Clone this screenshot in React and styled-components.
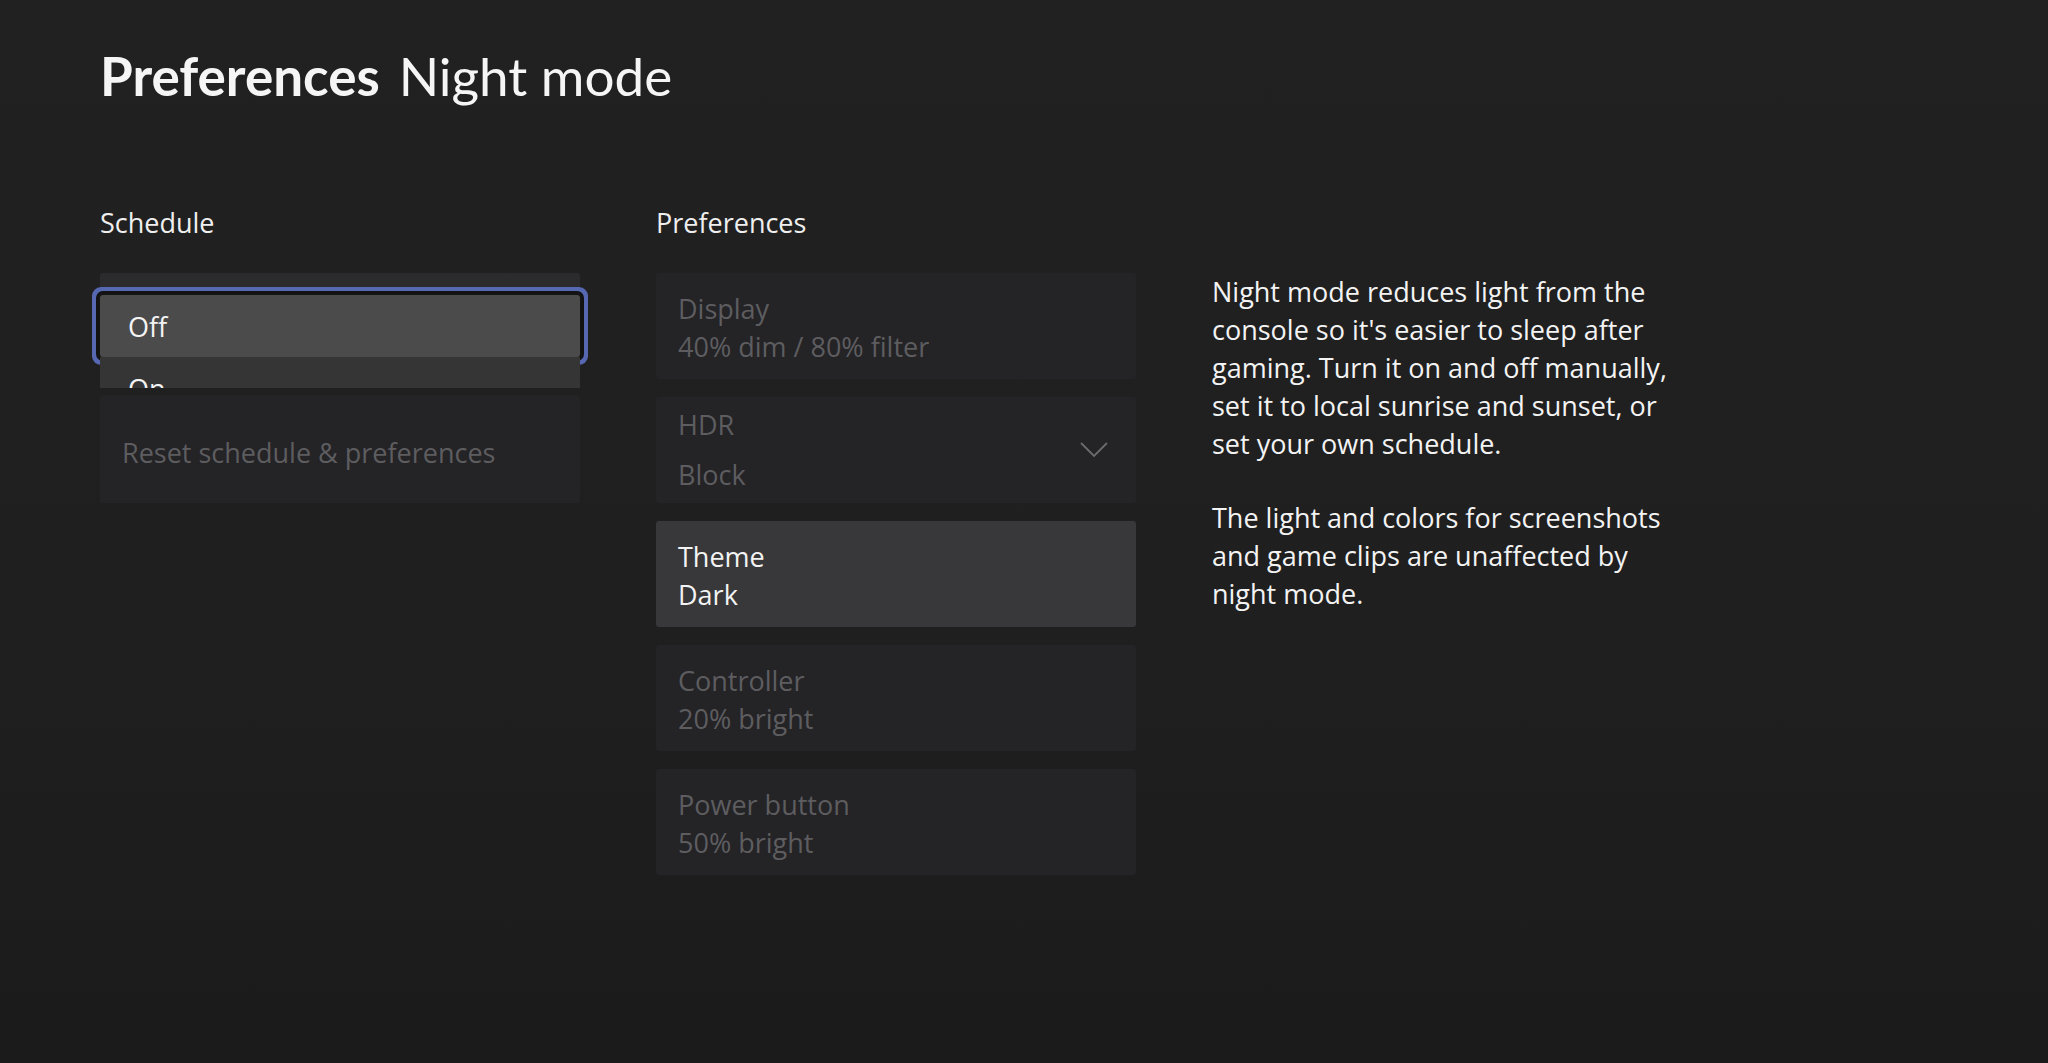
import React from 'react';
import styled, { createGlobalStyle } from 'styled-components';

const GlobalStyle = createGlobalStyle`
  html, body {
    margin: 0;
    padding: 0;
    background: #1c1c1c;
  }
  body {
    font-family: 'Open Sans', 'Noto Sans', sans-serif;
    -webkit-font-smoothing: antialiased;
  }
`;

const Page = styled.div`
  box-sizing: border-box;
  width: 100%;
  min-height: 100vh;
  padding: 44px 100px 0;
  background: linear-gradient(180deg, #212121 0%, #1f1f1f 60%, #1b1b1b 100%);
  color: #f2f2f2;
`;

const Title = styled.h1`
  margin: 0;
  font-family: 'Lato', sans-serif;
  font-size: 53px;
  line-height: 64px;
  font-weight: 400;
  color: #f5f5f5;

  strong {
    font-weight: 700;
    margin-right: 19px;
  }
`;

const Columns = styled.div`
  display: grid;
  grid-template-columns: 480px 480px 480px;
  column-gap: 76px;
  margin-top: 96px;
  align-items: start;
`;

const Column = styled.section`
  display: flex;
  flex-direction: column;
`;

const Label = styled.h2`
  margin: 0 0 31px;
  font-size: 27px;
  line-height: 38px;
  font-weight: 400;
  color: #efefef;
`;

const Stack = styled.div`
  display: flex;
  flex-direction: column;
  gap: ${(p) => p.$gap || 0}px;
`;

const DropList = styled.div`
  background: #2b2b2d;
  border-radius: 3px 3px 0 0;
  padding-top: 22px;
`;

const Option = styled.div`
  box-sizing: border-box;
  height: ${(p) => (p.$clip ? 31 : 62)}px;
  overflow: hidden;
  padding: 15px 28px 0;
  font-size: 27px;
  line-height: 34px;
  color: #f4f4f4;
  background: ${(p) => (p.$focused ? '#4b4b4c' : '#353536')};
  border-radius: ${(p) => (p.$focused ? '3px' : '0')};
  box-shadow: ${(p) =>
    p.$focused ? '0 0 0 2px #141414, 0 0 0 4px #121212, 0 0 0 8px #5668b1' : 'none'};
  position: relative;
`;

const Tile = styled.div`
  box-sizing: border-box;
  height: ${(p) => p.$h || 106}px;
  padding: ${(p) => p.$pad || '17px 22px 0'};
  border-radius: 3px;
  background: ${(p) => (p.$active ? '#38383a' : '#242326')};
  color: ${(p) => (p.$active ? '#f3f3f3' : '#5d5d60')};
  font-size: 27px;
  line-height: 38px;
  display: flex;
  align-items: ${(p) => (p.$center ? 'center' : 'flex-start')};
  justify-content: space-between;
`;

const TileText = styled.div`
  display: flex;
  flex-direction: column;
  gap: ${(p) => p.$gap || 0}px;
`;

const Chevron = styled.svg`
  width: 28px;
  height: 16px;
  margin-right: 28px;
  flex: none;
`;

const Description = styled.div`
  margin-top: 69px;
  width: 470px;
  font-size: 27px;
  line-height: 38px;
  color: #f3f3f3;

  p {
    margin: 0 0 36px;
  }
`;

const prefs = [
  { name: 'Display', value: '40% dim / 80% filter' },
  { name: 'HDR', value: 'Block', select: true },
  { name: 'Theme', value: 'Dark', active: true },
  { name: 'Controller', value: '20% bright' },
  { name: 'Power button', value: '50% bright' },
];

const PrefTile = ({ name, value, select, active }) =>
  select ? (
    <Tile $h={106} $pad="0 0 0 22px" $center>
      <TileText $gap={12}>
        <span>{name}</span>
        <span>{value}</span>
      </TileText>
      <Chevron viewBox="0 0 28 16">
        <polyline points="1,1 14,14 27,1" fill="none" stroke="#6b6b6d" strokeWidth="1.8" />
      </Chevron>
    </Tile>
  ) : (
    <Tile $active={active}>
      <TileText>
        <span>{name}</span>
        <span>{value}</span>
      </TileText>
    </Tile>
  );

export default function App() {
  return (
    <Page>
      <GlobalStyle />
      <Title>
        <strong>Preferences</strong>Night mode
      </Title>
      <Columns>
        <Column>
          <Label>Schedule</Label>
          <Stack $gap={7}>
            <DropList>
              <Option $focused>Off</Option>
              <Option $clip>On</Option>
            </DropList>
            <Tile $h={108} $pad="8px 22px 0" $center>
              Reset schedule &amp; preferences
            </Tile>
          </Stack>
        </Column>
        <Column>
          <Label>Preferences</Label>
          <Stack $gap={18}>
            {prefs.map((p) => (
              <PrefTile key={p.name} {...p} />
            ))}
          </Stack>
        </Column>
        <Column>
          <Description>
            <p>
              Night mode reduces light from the console so it's easier to sleep after gaming. Turn it
              on and off manually, set it to local sunrise and sunset, or set your own schedule.
            </p>
            <p>The light and colors for screenshots and game clips are unaffected by night mode.</p>
          </Description>
        </Column>
      </Columns>
    </Page>
  );
}
